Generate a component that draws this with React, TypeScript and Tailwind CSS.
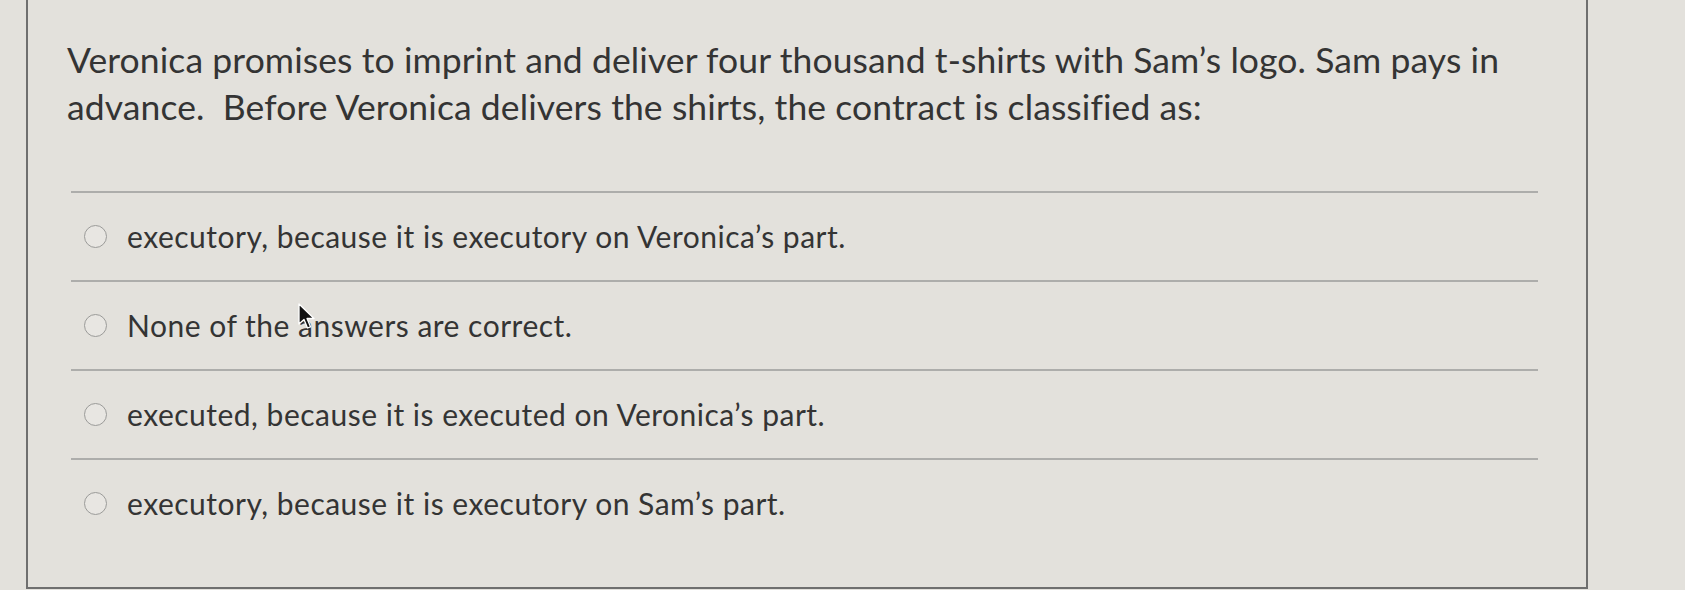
import React from "react";

const options = [
  "executory, because it is executory on Veronica\u2019s part.",
  "None of the answers are correct.",
  "executed, because it is executed on Veronica\u2019s part.",
  "executory, because it is executory on Sam\u2019s part.",
];

function Cursor() {
  return (
    <svg
      className="absolute left-[298px] top-[303px]"
      width="18"
      height="27"
      viewBox="0 0 18 27"
    >
      <path
        d="M1 1 L1 21 L6 16.5 L9.5 25 L12.5 23.8 L9 15.5 L16 15.5 Z"
        fill="#111"
        stroke="#fff"
        strokeWidth="1.3"
        strokeLinejoin="round"
      />
    </svg>
  );
}

export default function App() {
  return (
    <div
      className="relative w-[1685px] h-[590px] bg-[#e3e1dc] overflow-hidden"
      style={{ fontFamily: "Lato, 'Open Sans', sans-serif" }}
    >
      <div className="ml-[26px] w-[1562px] h-[589px] border-l-2 border-r-2 border-b-2 border-[#6f6f6f] pl-[39px] pr-[48px] pt-[36px]">
        <p className="text-[35.5px] leading-[47px] text-[#343434] tracking-[0.1px]">
          Veronica promises to imprint and deliver four thousand t-shirts with Sam&rsquo;s logo. Sam pays in advance.&nbsp; Before Veronica delivers the shirts, the contract is classified as:
        </p>

        <ul className="mt-[61px] ml-[4px]">
          {options.map((o) => (
            <li
              key={o}
              className="flex items-center h-[89px] border-t-2 border-[#adadab]"
            >
              <span className="ml-[13px] w-[23px] h-[23px] rounded-full border-[1.5px] border-[#9b9b99] bg-[#e8e6e2] shrink-0" />
              <span className="ml-[20px] text-[30px] tracking-[0.5px] text-[#343434]">{o}</span>
            </li>
          ))}
        </ul>
      </div>
      <Cursor />
    </div>
  );
}
